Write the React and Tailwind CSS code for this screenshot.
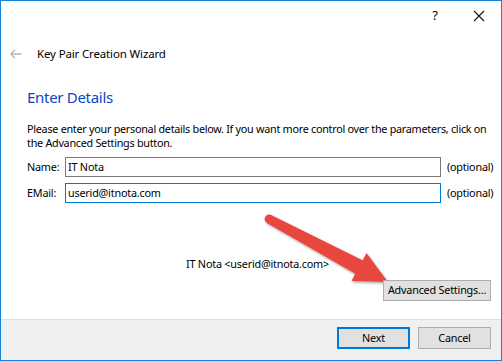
import React from "react";

function Arrow() {
  return (
    <svg
      className="absolute left-0 top-0 pointer-events-none z-0"
      width="502"
      height="361"
      viewBox="0 0 502 361"
    >
      <defs>
        <filter id="sh" x="-20%" y="-20%" width="140%" height="140%">
          <feDropShadow dx="1" dy="1.5" stdDeviation="1.2" floodColor="#000" floodOpacity="0.35" />
        </filter>
      </defs>
      <g filter="url(#sh)" fill="#e8473c">
        <polygon points="270.2,214 361.6,259.2 365.5,252 387,281 350.5,280 354.2,272.8 265.8,222" />
        <circle cx="268" cy="218" r="4.4" />
      </g>
    </svg>
  );
}

function Field({ label, value, focused }) {
  return (
    <div className="flex items-center h-[20px]">
      <span className="w-[38px] shrink-0">{label}</span>
      <div
        className={
          "w-[376px] shrink-0 h-[20px] border flex items-center pl-[2px] " +
          (focused ? "border-[#0078d7]" : "border-[#7a7a7a]")
        }
      >
        {value}
      </div>
      <span className="ml-[6px] whitespace-nowrap">(optional)</span>
    </div>
  );
}

export default function App() {
  return (
    <div className="relative w-[502px] h-[361px] bg-white border border-[#1883d7] flex flex-col text-black font-['Noto_Sans',sans-serif] text-[10.8px] tracking-[-0.2px] leading-none overflow-hidden">
      {/* title bar */}
      <div className="h-[29px] flex items-center justify-end shrink-0">
        <span className="text-[13px] tracking-normal mr-[35px]">?</span>
        <svg width="12" height="12" viewBox="0 0 12 12" className="mr-[16px]">
          <path d="M1 1 L11 11 M11 1 L1 11" stroke="#111" strokeWidth="1.1" />
        </svg>
      </div>
      {/* header */}
      <div className="h-[20px] mt-[14px] flex items-center shrink-0">
        <svg width="12" height="10" viewBox="0 0 12 10" className="ml-[9px]">
          <path d="M0.5 5 H11.5 M5 0.8 L0.8 5 L5 9.2" stroke="#b5b5b5" strokeWidth="1.3" fill="none" />
        </svg>
        <span className="ml-[15px] text-[11.5px] tracking-[-0.15px]">Key Pair Creation Wizard</span>
      </div>
      {/* content */}
      <div className="flex-1 flex flex-col pl-[26px] pr-[10px]">
        <div className="mt-[23px] text-[15px] tracking-[-0.3px] text-[#0a45c2] h-[20px] flex items-center">Enter Details</div>
        <div className="mt-[15px] leading-[14px] tracking-[-0.27px] -mr-[2px]">
          Please enter your personal details below. If you want more control over the parameters, click on the
          Advanced Settings button.
        </div>
        <div className="mt-[7px] flex flex-col gap-[6px]">
          <Field label="Name:" value="IT Nota" />
          <Field label="EMail:" value="userid@itnota.com" focused />
        </div>
        <div className="mt-[54px] pl-[159px] h-[14px] flex items-center">IT Nota &lt;userid@itnota.com&gt;</div>
        <div className="mt-[9px] flex justify-end">
          <button className="relative z-10 w-[108px] h-[21px] bg-[#e1e1e1] border border-[#adadad] whitespace-nowrap flex items-center justify-center">
            Advanced Settings...
          </button>
        </div>
      </div>
      {/* footer */}
      <div className="h-[41px] shrink-0 bg-[#f0f0f0] border-t border-[#dfdfdf] flex items-start justify-end pt-[7px] pr-[10px] gap-[8px]">
        <button className="w-[73px] h-[22px] bg-[#e1e1e1] border-2 border-[#0078d7] flex items-center justify-center">
          Next
        </button>
        <button className="w-[73px] h-[22px] bg-[#e1e1e1] border border-[#adadad] flex items-center justify-center">
          Cancel
        </button>
      </div>
      <Arrow />
    </div>
  );
}
